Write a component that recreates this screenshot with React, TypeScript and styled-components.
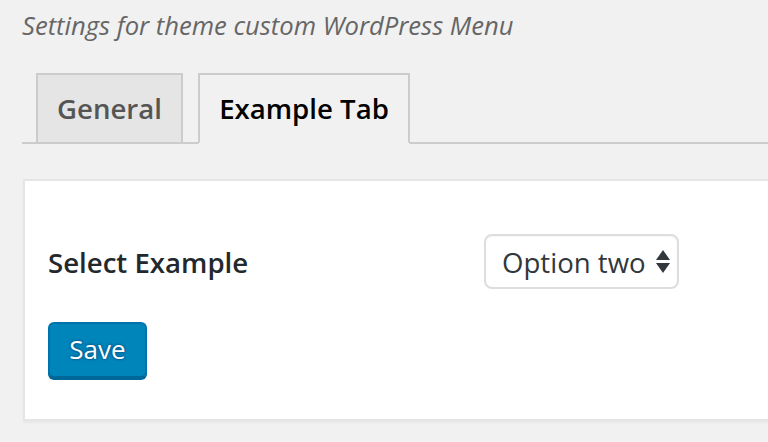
import React from "react";
import styled, { createGlobalStyle } from "styled-components";

const Global = createGlobalStyle`
  html, body { margin: 0; padding: 0; background: #f1f1f1; }
  body { font-family: "Open Sans", "Noto Sans", sans-serif; overflow: hidden; }
  * { box-sizing: border-box; }
`;

const Page = styled.div`
  width: 768px;
  height: 442px;
  padding: 0 0 0 22px;
  overflow: hidden;
`;

const Title = styled.p`
  margin: 0;
  padding-top: 9px;
  height: 73px;
  font-style: italic;
  font-size: 25.6px;
  line-height: 34px;
  color: #666;
`;

const TabBar = styled.div`
  display: flex;
  align-items: flex-end;
  gap: 15px;
  padding-left: 14px;
  border-bottom: 2px solid #ccc;
  height: 71px;
`;

const Tab = styled.div<{ $active?: boolean }>`
  height: 71px;
  margin-bottom: -2px;
  padding: 0 0 2px;
  display: flex;
  align-items: center;
  justify-content: center;
  white-space: nowrap;
  border: 2px solid #ccc;
  border-bottom: ${(p) => (p.$active ? "2px solid #f1f1f1" : "2px solid #ccc")};
  background: ${(p) => (p.$active ? "#f1f1f1" : "#e5e5e5")};
  color: ${(p) => (p.$active ? "#000" : "#555")};
  font-size: 27.6px;
  font-weight: 600;
  width: ${(p) => (p.$active ? "212px" : "147px")};
`;

const Panel = styled.div`
  margin-top: 35px;
  margin-left: 1px;
  width: 780px;
  height: 242px;
  background: #fff;
  border: 2px solid #e5e5e5;
  border-right: none;
  box-shadow: 0 2px 2px rgba(0, 0, 0, 0.04);
  padding: 53px 0 0 23px;
`;

const Row = styled.div`
  display: grid;
  grid-template-columns: 436px auto;
  align-items: center;
`;

const Label = styled.label`
  font-size: 27.6px;
  font-weight: 600;
  color: #23282d;
  line-height: 40px;
`;

const SelectBox = styled.div`
  width: 195px;
  height: 55px;
  border: 2px solid #ddd;
  border-radius: 8px;
  background: #fff;
  display: flex;
  align-items: center;
  justify-content: space-between;
  padding: 0 7px 0 16px;
  font-size: 27.6px;
  color: #32373c;
  box-shadow: inset 0 1px 2px rgba(0, 0, 0, 0.04);
`;

const SaveButton = styled.button`
  margin-top: 33px;
  width: 99px;
  height: 56px;
  background: #0085ba;
  border: 2px solid #0073aa;
  border-bottom-color: #006799;
  border-radius: 6px;
  box-shadow: 0 2px 0 #006799;
  color: #fff;
  font-family: "Open Sans", "Noto Sans", sans-serif;
  font-size: 26px;
  font-weight: 400;
  text-shadow: 0 -1px 2px #006799, 1px 0 2px #006799, 0 1px 2px #006799, -1px 0 2px #006799;
  padding: 0 0 3px;
  display: block;
`;

const Arrows = () => (
  <svg width="14" height="24" viewBox="0 0 14 24">
    <polygon points="7,0 14,10 0,10" fill="#32373c" />
    <polygon points="0,13 14,13 7,23" fill="#32373c" />
  </svg>
);

export default function App() {
  return (
    <>
      <Global />
      <Page>
        <Title>Settings for theme custom WordPress Menu</Title>
        <TabBar>
          <Tab>General</Tab>
          <Tab $active>Example Tab</Tab>
        </TabBar>
        <Panel>
          <Row>
            <Label>Select Example</Label>
            <SelectBox>
              <span>Option two</span>
              <Arrows />
            </SelectBox>
          </Row>
          <SaveButton>Save</SaveButton>
        </Panel>
      </Page>
    </>
  );
}
